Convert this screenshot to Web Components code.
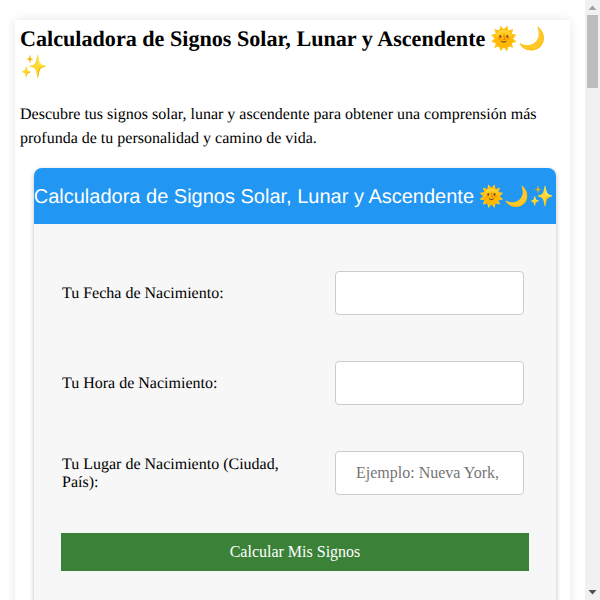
<!DOCTYPE html>
<html lang="es">
<head>
<meta charset="utf-8">
<title>Calculadora de Signos</title>
<style>
    html, body { margin: 0; background: #fff; }
    body { font-family: "Liberation Serif", "Times New Roman", serif; color: #000; text-rendering: geometricPrecision; }
</style>
</head>
<body>
<sign-page>
    <span slot="title">Calculadora de Signos Solar, Lunar y Ascendente 🌞🌙✨</span>
    <span slot="intro">Descubre tus signos solar, lunar y ascendente para obtener una comprensión más profunda de tu personalidad y camino de vida.</span>
    <sign-card heading="Calculadora de Signos Solar, Lunar y Ascendente 🌞🌙✨">
        <sign-field label="Tu Fecha de Nacimiento:"></sign-field>
        <sign-field label="Tu Hora de Nacimiento:"></sign-field>
        <sign-field label="Tu Lugar de Nacimiento (Ciudad, País):" placeholder="Ejemplo: Nueva York, EE.UU."></sign-field>
        <sign-button>Calcular Mis Signos</sign-button>
    </sign-card>
</sign-page>
<fake-scrollbar></fake-scrollbar>
<script>
class SignPage extends HTMLElement {
    constructor() {
        super();
        this.attachShadow({ mode: "open" });
        this.shadowRoot.innerHTML = `
            <style>
            :host { display: block; padding: 20px 0 0 15px; width: 555px; height: 4665px; }
            .wrap {
                box-sizing: border-box;
                height: 100%;
                padding: 5px;
                background: #fff;
                box-shadow: 0 0 10px rgba(0,0,0,0.1);
            }
            h1 { margin: 0 0 22px; font-size: 22.14px; line-height: 28px; font-weight: bold; }
            p { margin: 0 0 17px; font-size: 16px; line-height: 24px; }
            .body { padding: 0 9px 0 14px; }
            </style>
            <div class="wrap">
                <h1><slot name="title"></slot></h1>
                <p><slot name="intro"></slot></p>
                <div class="body"><slot></slot></div>
            </div>
        `;
    }
}
customElements.define("sign-page", SignPage);

class SignCard extends HTMLElement {
    constructor() {
        super();
        this.attachShadow({ mode: "open" });
        this.shadowRoot.innerHTML = `
            <style>
            :host {
                display: block;
                height: 1200px;
                background: #f7f7f7;
                border-radius: 8px;
                box-shadow: 0 2px 5px rgba(0,0,0,0.25);
            }
            header {
                box-sizing: border-box;
                height: 56px;
                padding-right: 2px;
                display: flex;
                align-items: center;
                justify-content: center;
                white-space: nowrap;
                background: #2196f3;
                color: #fff;
                border-radius: 8px 8px 0 0;
                font: 20px "Liberation Sans", Arial, sans-serif;
            }
            .form { display: flex; flex-direction: column; padding: 47px 27px 0; }
            </style>
            <header></header>
            <div class="form"><slot></slot></div>
        `;
        this.shadowRoot.querySelector("header").textContent = this.getAttribute("heading");
    }
}
customElements.define("sign-card", SignCard);

class SignField extends HTMLElement {
    constructor() {
        super();
        this.attachShadow({ mode: "open" });
        this.shadowRoot.innerHTML = `
            <style>
            :host {
                display: grid;
                grid-template-columns: 1fr 189px;
                column-gap: 40px;
                align-items: center;
                height: 44px;
                margin-bottom: 46px;
                padding: 0 5px 0 1px;
            }
            label { font-size: 16px; line-height: 18px; padding-top: 2px; }
            input {
                box-sizing: border-box;
                width: 189px;
                height: 44px;
                padding: 0 20px;
                border: 1px solid #ccc;
                border-radius: 4px;
                background: #fff;
                outline: none;
                font: 16px "Liberation Serif", "Times New Roman", serif;
            }
            input::placeholder { color: #757575; }
            </style>
            <label></label>
            <input type="text">
        `;
        this.shadowRoot.querySelector("label").textContent = this.getAttribute("label");
        this.shadowRoot.querySelector("input").placeholder = this.getAttribute("placeholder") || "";
    }
}
customElements.define("sign-field", SignField);

class SignButton extends HTMLElement {
    constructor() {
        super();
        this.attachShadow({ mode: "open" });
        this.shadowRoot.innerHTML = `
            <style>
            :host { display: block; margin-top: -8px; }
            button {
                display: block;
                width: 100%;
                height: 38px;
                border: 0;
                background: #3b8238;
                color: #fff;
                font: 16px "Liberation Serif", "Times New Roman", serif;
            }
            </style>
            <button type="button"><slot></slot></button>
        `;
    }
}
customElements.define("sign-button", SignButton);

// headless shot has no native scrollbar, so this one is drawn over the page edge
class FakeScrollbar extends HTMLElement {
    constructor() {
        super();
        this.attachShadow({ mode: "open" });
        this.shadowRoot.innerHTML = `
            <style>
            :host {
                position: fixed;
                top: 0;
                right: 0;
                bottom: 0;
                width: 15px;
                display: flex;
                flex-direction: column;
                background: #f1f1f1;
            }
            .arrow { height: 15px; }
            .track { flex: 1; padding: 0 2px; }
            .thumb { height: 73px; background: #bdbdbd; }
            svg { width: 15px; height: 15px; fill: #a3a3a3; display: block; }
            .down svg { fill: #505050; }
            </style>
            <div class="arrow"><svg viewBox="0 0 15 15"><path d="M3.5 10 7.5 5.5 11.5 10z"/></svg></div>
            <div class="track"><div class="thumb"></div></div>
            <div class="arrow down"><svg viewBox="0 0 15 15"><path d="M3.5 5 7.5 9.5 11.5 5z"/></svg></div>
        `;
    }
}
customElements.define("fake-scrollbar", FakeScrollbar);
</script>
</body>
</html>
